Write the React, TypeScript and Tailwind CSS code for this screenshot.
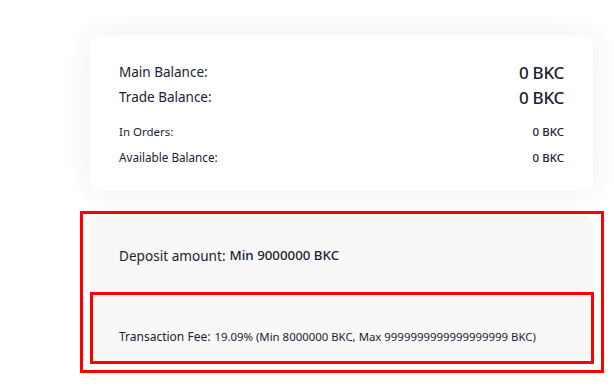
export default function App() {
  return (
    <div className="min-h-[391px] w-[614px] bg-white pl-[90px] pt-[35px] font-['Noto_Sans',sans-serif] text-[#1b2232]">
      <div className="flex h-[156px] w-[503px] flex-col rounded-[10px] bg-white px-[29px] pb-[20px] pt-[25px] shadow-[0_0_30px_rgba(0,0,0,0.07)]">
        <div className="flex h-[25px] items-center justify-between">
          <span className="text-[13.5px]">Main Balance:</span>
          <span className="text-[17px] font-medium tracking-[-0.3px]">0 BKC</span>
        </div>
        <div className="flex h-[25px] items-center justify-between">
          <span className="text-[13.5px]">Trade Balance:</span>
          <span className="text-[17px] font-medium tracking-[-0.3px]">0 BKC</span>
        </div>
        <div className="mt-[9px] flex h-[26px] items-center justify-between text-[11.5px]">
          <span>In Orders:</span>
          <span className="font-medium">0 BKC</span>
        </div>
        <div className="flex h-[26px] items-center justify-between text-[11.5px]">
          <span className="text-[11.7px]">Available Balance:</span>
          <span className="font-medium">0 BKC</span>
        </div>
      </div>
      <div className="ml-[-10px] mt-[20px] w-[524px] border-[3px] border-[#ff0000] pb-[6px] pl-[7px] pr-[8px] pt-[1px]">
        <div className="rounded-t-[10px] bg-[#f8f8f8]">
          <div className="flex items-center gap-[4px] pb-[26px] pl-[29px] pt-[30px] leading-[21px]">
            <span className="text-[13.6px]">Deposit amount:</span>
            <span className="text-[13.3px] font-medium">Min 9000000 BKC</span>
          </div>
          <div className="mr-[-1px] flex h-[72px] items-start gap-[4px] border-[3px] border-[#ff0000] pl-[26px] pt-[34px] leading-[16px]">
            <span className="text-[12px]">Transaction Fee:</span>
            <span className="text-[11.4px]">19.09% (Min 8000000 BKC, Max 9999999999999999999 BKC)</span>
          </div>
        </div>
      </div>
    </div>
  );
}
